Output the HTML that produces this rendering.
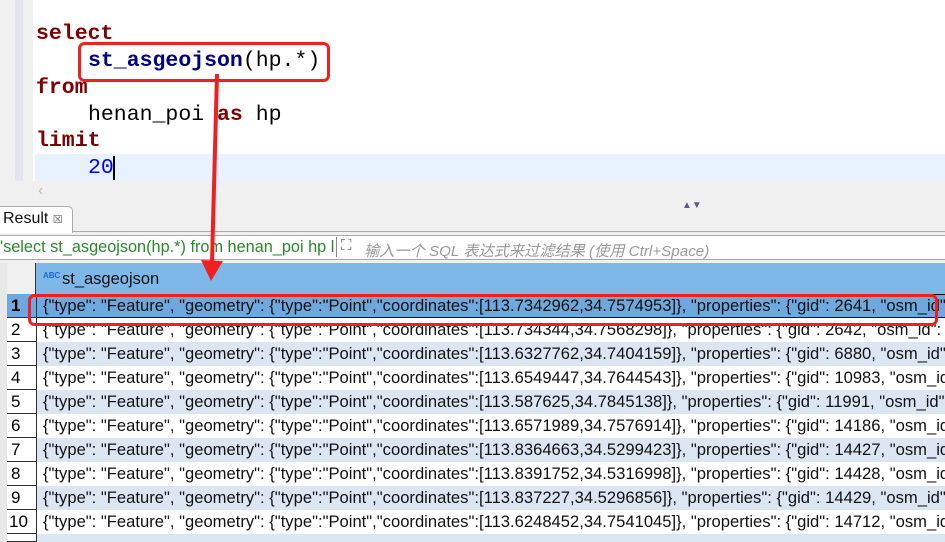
<!DOCTYPE html>
<html><head><meta charset="utf-8"><style>
*{margin:0;padding:0;box-sizing:border-box}
html,body{width:945px;height:542px;overflow:hidden}
body{background:#f0f0f0;position:relative;font-family:"Liberation Sans","Noto Sans CJK SC",sans-serif}
.abs{position:absolute}
.code{font-family:"Liberation Mono","DejaVu Sans Mono",monospace;font-size:21.5px;white-space:pre;position:absolute;line-height:26px}
.kw{color:#7f0000;font-weight:bold}
.fn{color:#000080;font-weight:bold}
.row{position:absolute;left:36px;width:909px;height:24px;font-size:16.6px;line-height:24px;padding-left:7px;white-space:nowrap;overflow:hidden;color:#111}
.num{position:absolute;left:7px;width:29px;height:24px;font-size:17px;line-height:24px;padding-left:4px;border-bottom:1px solid #333;background:#fff}
</style></head><body>
<div class="abs" style="left:0;top:0;width:945px;height:181px;background:#fff"></div>
<div class="abs" style="left:0;top:0;width:33px;height:181px;background:#f0f0f0"></div>
<div class="abs" style="left:15px;top:0;width:8px;height:181px;background:#e4e4f0"></div>
<div class="abs" style="left:35px;top:154px;width:910px;height:27px;background:#e8f2fe"></div>
<div class="code kw" style="left:36px;top:21px">select</div>
<div class="code fn" style="left:88px;top:48px">st_asgeojson<span style="font-weight:normal;color:#000">(hp.*)</span></div>
<div class="code kw" style="left:36px;top:75px">from</div>
<div class="code" style="left:88px;top:102px">henan_poi <span class="kw">as</span> hp</div>
<div class="code kw" style="left:36px;top:128px">limit</div>
<div class="code" style="left:88px;top:155px;color:#0000ff">20</div>
<div class="abs" style="left:113px;top:156px;width:2px;height:24px;background:#000"></div>
<div class="abs" style="left:38px;top:182px;color:#bbb;font-size:16px">&lsaquo;</div>
<div class="abs" style="left:682px;top:200px;color:#5a5a9a;font-size:10px">▲▼</div>
<div class="abs" style="left:0;top:231px;width:945px;height:1px;background:#aaa"></div>
<div class="abs" style="left:0;top:206px;width:73px;height:27px;background:#fff;border:1px solid #aaa;border-bottom:none;border-left:none;border-radius:0 5px 0 0"></div>
<div class="abs" style="left:3px;top:210px;font-size:16px;color:#111">Result <span style="font-size:11px;color:#666">☒</span></div>
<div class="abs" style="left:0;top:235px;width:945px;height:25px;background:#fff;border-top:1px solid #aaa;border-bottom:1px solid #aaa"></div>
<div class="abs" style="left:0;top:238px;font-size:16.3px;color:#2a8a2a;white-space:nowrap">'select st_asgeojson(hp.*) from henan_poi hp l</div>
<div class="abs" style="left:336px;top:237px;width:1px;height:20px;background:#888"></div>
<div class="abs" style="left:341px;top:237px;font-size:15px;color:#666">⛶</div>
<div class="abs" style="left:364px;top:239px;font-size:15.2px;color:#999;font-style:italic;white-space:nowrap">输入一个 SQL 表达式来过滤结果 (使用 Ctrl+Space)</div>
<div class="abs" style="left:0;top:263px;width:7px;height:279px;background:#e8e8e8"></div>
<div class="abs" style="left:7px;top:263px;width:29px;height:31px;background:#f0f0f0;border-right:1px solid #333"></div>
<div class="abs" style="left:36px;top:263px;width:909px;height:31px;background:#7db8e8"></div>
<div class="abs" style="left:43px;top:271px;font-size:8px;color:#2266cc;font-weight:bold">ABC</div>
<div class="abs" style="left:62px;top:270px;font-size:16.5px;color:#111">st_asgeojson</div>
<div class="num" style="top:294px;background:#6fa8dc;font-weight:bold">1</div>
<div class="row" style="top:294px;background:#6fa8dc;border-top:1px solid #111;border-bottom:1px solid #111;line-height:22px">{"type": "Feature", "geometry": {"type":"Point","coordinates":[113.7342962,34.7574953]}, "properties": {"gid": 2641, "osm_id": "1</div>
<div class="num" style="top:318px">2</div><div class="row" style="top:318px;background:#fff">{"type": "Feature", "geometry": {"type":"Point","coordinates":[113.734344,34.7568298]}, "properties": {"gid": 2642, "osm_id": "</div>
<div class="num" style="top:342px">3</div><div class="row" style="top:342px;background:#dce6f2">{"type": "Feature", "geometry": {"type":"Point","coordinates":[113.6327762,34.7404159]}, "properties": {"gid": 6880, "osm_id": "</div>
<div class="num" style="top:366px">4</div><div class="row" style="top:366px;background:#fff">{"type": "Feature", "geometry": {"type":"Point","coordinates":[113.6549447,34.7644543]}, "properties": {"gid": 10983, "osm_id": "</div>
<div class="num" style="top:390px">5</div><div class="row" style="top:390px;background:#dce6f2">{"type": "Feature", "geometry": {"type":"Point","coordinates":[113.587625,34.7845138]}, "properties": {"gid": 11991, "osm_id": "</div>
<div class="num" style="top:414px">6</div><div class="row" style="top:414px;background:#fff">{"type": "Feature", "geometry": {"type":"Point","coordinates":[113.6571989,34.7576914]}, "properties": {"gid": 14186, "osm_id": "</div>
<div class="num" style="top:438px">7</div><div class="row" style="top:438px;background:#dce6f2">{"type": "Feature", "geometry": {"type":"Point","coordinates":[113.8364663,34.5299423]}, "properties": {"gid": 14427, "osm_id": "</div>
<div class="num" style="top:462px">8</div><div class="row" style="top:462px;background:#fff">{"type": "Feature", "geometry": {"type":"Point","coordinates":[113.8391752,34.5316998]}, "properties": {"gid": 14428, "osm_id": "</div>
<div class="num" style="top:486px">9</div><div class="row" style="top:486px;background:#dce6f2">{"type": "Feature", "geometry": {"type":"Point","coordinates":[113.837227,34.5296856]}, "properties": {"gid": 14429, "osm_id": "</div>
<div class="num" style="top:510px;padding-left:2px">10</div><div class="row" style="top:510px;background:#fff">{"type": "Feature", "geometry": {"type":"Point","coordinates":[113.6248452,34.7541045]}, "properties": {"gid": 14712, "osm_id": "</div>
<div class="num" style="top:534px;height:8px"></div><div class="row" style="top:534px;height:8px;background:#dce6f2"></div>
<div class="abs" style="left:36px;top:294px;width:1px;height:248px;background:#333"></div>
<svg class="abs" style="left:0;top:0" width="945" height="542">
<rect x="79.5" y="43.5" width="249" height="37" rx="5" fill="none" stroke="#f02020" stroke-width="3"/>
<rect x="29.5" y="295.5" width="907" height="29" rx="5" fill="none" stroke="#f02020" stroke-width="3"/>
<line x1="217" y1="74" x2="212" y2="262" stroke="#f02020" stroke-width="4"/>
<polygon points="201,260 223,261 211,281" fill="#f02020"/>
</svg>
</body></html>
